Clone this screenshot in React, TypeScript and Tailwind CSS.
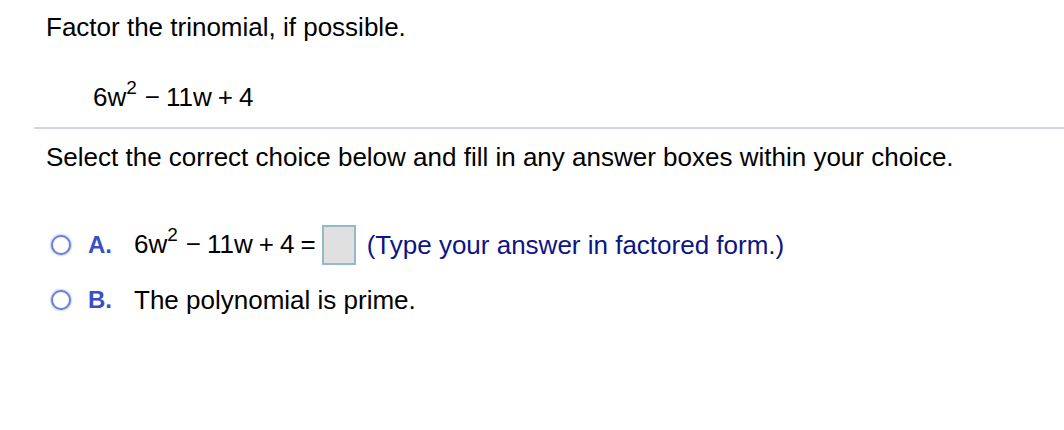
import React from "react";

function Radio() {
  return (
    <span className="inline-block w-[20px] h-[20px] rounded-full border-[2px] border-[#6a7fd9] shadow-[0_0_1.5px_1px_rgba(110,130,218,0.35)] bg-white shrink-0" />
  );
}

function Eq({ eq }: { eq?: boolean }) {
  return (
    <span className="whitespace-nowrap">
      6w<span className="relative top-[-12px] text-[19px]">2</span>
      <span className="ml-[8px]">−</span>
      <span className="ml-[6px]">11w</span>
      <span className="ml-[6px]">+</span>
      <span className="ml-[6px]">4</span>
      {eq ? <span className="ml-[6px]">=</span> : null}
    </span>
  );
}

export default function App() {
  return (
    <div className="w-[1064px] h-[430px] bg-white font-['Liberation_Sans',Arial,sans-serif] text-black overflow-hidden text-[26px] leading-[30px]">
      <div className="pl-[46px] pt-[12px]">Factor the trinomial, if possible.</div>
      <div className="pl-[93px] mt-[40px]">
        <Eq />
      </div>
      <div className="ml-[34px] mt-[12px] h-[2px] bg-[#d0d3e3]" />
      <div className="pl-[46px] mt-[13px]">
        Select the correct choice below and fill in any answer boxes within your choice.
      </div>
      <div className="pl-[51px] mt-[53px] flex items-center h-[40px]">
        <Radio />
        <span className="ml-[17px] w-[46px] font-bold text-[24px] text-[#3a4fc5]">A.</span>
        <Eq eq />
        <span className="ml-[6px] w-[34px] h-[40px] border-[2px] border-[#92b9cc] bg-[#e0e0e0]" />
        <span className="ml-[11px] text-[#0d1484]">(Type your answer in factored form.)</span>
      </div>
      <div className="pl-[51px] mt-[20px] flex items-center h-[30px]">
        <Radio />
        <span className="ml-[17px] w-[46px] font-bold text-[24px] text-[#3a4fc5]">B.</span>
        <span>The polynomial is prime.</span>
      </div>
    </div>
  );
}
